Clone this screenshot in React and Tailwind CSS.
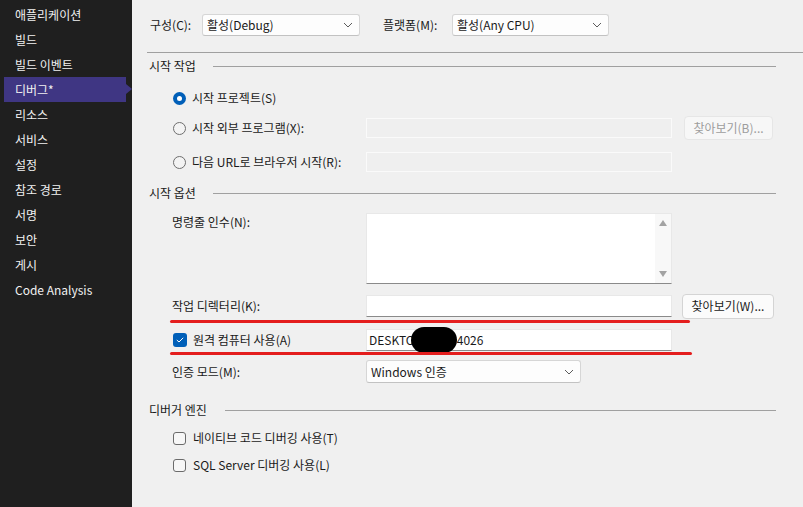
import React from "react";

const navItems = [
  "애플리케이션",
  "빌드",
  "빌드 이벤트",
  "디버그*",
  "리소스",
  "서비스",
  "설정",
  "참조 경로",
  "서명",
  "보안",
  "게시",
  "Code Analysis",
];

function Chevron() {
  return (
    <svg width="10" height="6" viewBox="0 0 10 6" className="shrink-0">
      <polyline points="1,1 5,5 9,1" fill="none" stroke="#5c5c5c" strokeWidth="1" />
    </svg>
  );
}

function Dropdown({ value, className }) {
  return (
    <div
      className={`flex items-center justify-between h-[22px] pl-[4px] pr-[6px] bg-[#fdfdfd] border border-[#d6d6d6] border-b-[#c2c2c2] rounded-[3px] ${className}`}
    >
      <span className="leading-[16px]">{value}</span>
      <Chevron />
    </div>
  );
}

function Section({ title, width }) {
  return (
    <div className="flex items-center h-[16px] pl-[17px] pr-[27px]">
      <span className={`leading-[16px] shrink-0 ${width}`}>{title}</span>
      <div className="flex-1 h-px bg-[#a0a0a0]" />
    </div>
  );
}

function Radio({ checked }) {
  return checked ? (
    <span className="w-[13px] h-[13px] rounded-full bg-[#005fb8] flex items-center justify-center shrink-0">
      <span className="w-[5px] h-[5px] rounded-full bg-white" />
    </span>
  ) : (
    <span className="w-[13px] h-[13px] rounded-full border border-[#6e6e6e] bg-[#f3f3f3] shrink-0" />
  );
}

function Checkbox({ checked }) {
  return checked ? (
    <span className="w-[14px] h-[14px] rounded-[3px] bg-[#005fb8] flex items-center justify-center shrink-0">
      <svg width="8" height="6" viewBox="0 0 8 6">
        <polyline points="0.8,3 3,5 7.2,0.8" fill="none" stroke="#fff" strokeWidth="1" />
      </svg>
    </span>
  ) : (
    <span className="w-[13px] h-[13px] rounded-[3px] border border-[#6b6b6b] bg-[#f7f7f7] shrink-0" />
  );
}

function App() {
  return (
    <div className="flex w-[803px] h-[507px] overflow-hidden text-[12px] text-[#1a1a1a] font-['Noto_Sans_CJK_KR','Noto_Sans',sans-serif]">
      {/* sidebar */}
      <div className="w-[132px] shrink-0 bg-[#1f1f1f] pt-[2px] text-[#f1f1f1]">
        {navItems.map((item) =>
          item === "디버그*" ? (
            <div key={item} className="relative h-[25px] ml-[4px] w-[122px] bg-[#3f3683] flex items-center pl-[11px]">
              <span className="leading-[16px]">{item}</span>
              <span className="absolute right-[-6px] top-[7px] w-0 h-0 border-y-[5px] border-y-transparent border-l-[6px] border-l-[#3f3683]" />
            </div>
          ) : (
            <div key={item} className="h-[25px] flex items-center pl-[15px]">
              <span className="leading-[16px]">{item}</span>
            </div>
          )
        )}
      </div>

      {/* main */}
      <div className="flex-1 bg-[#f0f0f0] flex flex-col">
        <div className="mt-[14px] h-[22px] flex items-center pl-[18px]">
          <span className="w-[52px] leading-[16px]">구성(C):</span>
          <Dropdown value="활성(Debug)" className="w-[158px]" />
          <span className="ml-[23px] w-[69px] leading-[16px]">플랫폼(M):</span>
          <Dropdown value="활성(Any CPU)" className="w-[157px]" />
        </div>

        <div className="mt-[16px] ml-[15px] h-px bg-[#a0a0a0]" />

        <div className="mt-[5px]">
          <Section title="시작 작업" width="w-[64px]" />
        </div>

        <div className="mt-[14px] h-[20px] flex items-center pl-[41px]">
          <Radio checked />
          <span className="ml-[6px] leading-[16px]">시작 프로젝트(S)</span>
        </div>

        <div className="mt-[10px] h-[20px] flex items-center pl-[41px]">
          <div className="w-[193px] flex items-center">
            <Radio />
            <span className="ml-[6px] leading-[16px]">시작 외부 프로그램(X):</span>
          </div>
          <div className="w-[306px] h-[20px] bg-[#efefef] border border-[#fafafa]" />
          <div className="ml-[12px] w-[89px] h-[24px] flex items-center justify-center bg-[#f7f7f7] border border-[#e6e6e6] rounded-[4px] text-[#9d9d9d]">
            <span className="leading-[16px]">찾아보기(B)...</span>
          </div>
        </div>

        <div className="mt-[14px] h-[20px] flex items-center pl-[41px]">
          <div className="w-[193px] flex items-center">
            <Radio />
            <span className="ml-[6px] leading-[16px]">다음 URL로 브라우저 시작(R):</span>
          </div>
          <div className="w-[306px] h-[20px] bg-[#efefef] border border-[#fafafa]" />
        </div>

        <div className="mt-[13px]">
          <Section title="시작 옵션" width="w-[64px]" />
        </div>

        <div className="mt-[12px] h-[71px] flex items-start pl-[40px]">
          <span className="w-[194px] leading-[16px] pt-px">명령줄 인수(N):</span>
          <div className="w-[306px] h-[71px] bg-white border border-[#e8e8e8] border-b-[#8a8a8a] flex justify-end">
            <div className="w-[16px] h-full bg-[#f8f8f8] flex flex-col items-center justify-between py-[6px]">
              <span className="w-0 h-0 border-x-[4px] border-x-transparent border-b-[6px] border-b-[#a3a3a3]" />
              <span className="w-0 h-0 border-x-[4px] border-x-transparent border-t-[6px] border-t-[#a3a3a3]" />
            </div>
          </div>
        </div>

        <div className="mt-[11px] h-[22px] flex items-center pl-[40px]">
          <span className="w-[194px] leading-[16px]">작업 디렉터리(K):</span>
          <div className="w-[306px] h-[22px] bg-white border border-[#e8e8e8] border-b-[#8a8a8a]" />
          <div className="ml-[10px] w-[92px] h-[25px] flex items-center justify-center bg-[#fbfbfb] border border-[#d4d4d4] rounded-[4px]">
            <span className="leading-[16px]">찾아보기(W)...</span>
          </div>
        </div>

        <div className="mt-[3px] ml-[38px] w-[520px] h-[3px] rounded-full bg-[#e41e1e]" />

        <div className="mt-[6px] h-[22px] flex items-center pl-[41px]">
          <div className="w-[193px] flex items-center">
            <Checkbox checked />
            <span className="ml-[6px] leading-[16px]">원격 컴퓨터 사용(A)</span>
          </div>
          <div className="w-[306px] h-[22px] bg-white border border-[#e8e8e8] border-b-[#8a8a8a] flex items-center pl-[2px]">
            <span className="leading-[16px]">DESKTO</span>
            <span className="-ml-[4px] w-[46px] h-[26px] -my-[2px] rounded-full bg-black shrink-0" />
            <span className="leading-[16px]">4026</span>
          </div>
        </div>

        <div className="mt-[1px] ml-[38px] w-[522px] h-[3px] rounded-full bg-[#e41e1e]" />

        <div className="mt-[5px] h-[23px] flex items-center pl-[40px]">
          <span className="w-[194px] leading-[16px]">인증 모드(M):</span>
          <Dropdown value="Windows 인증" className="w-[215px] h-[23px] pl-[3px]" />
        </div>

        <div className="mt-[19px]">
          <Section title="디버거 엔진" width="w-[76px]" />
        </div>

        <div className="mt-[11px] h-[18px] flex items-center pl-[41px]">
          <Checkbox />
          <span className="ml-[7px] leading-[16px]">네이티브 코드 디버깅 사용(T)</span>
        </div>

        <div className="mt-[9px] h-[18px] flex items-center pl-[41px]">
          <Checkbox />
          <span className="ml-[7px] leading-[16px]">SQL Server 디버깅 사용(L)</span>
        </div>
      </div>
    </div>
  );
}

export default App;
